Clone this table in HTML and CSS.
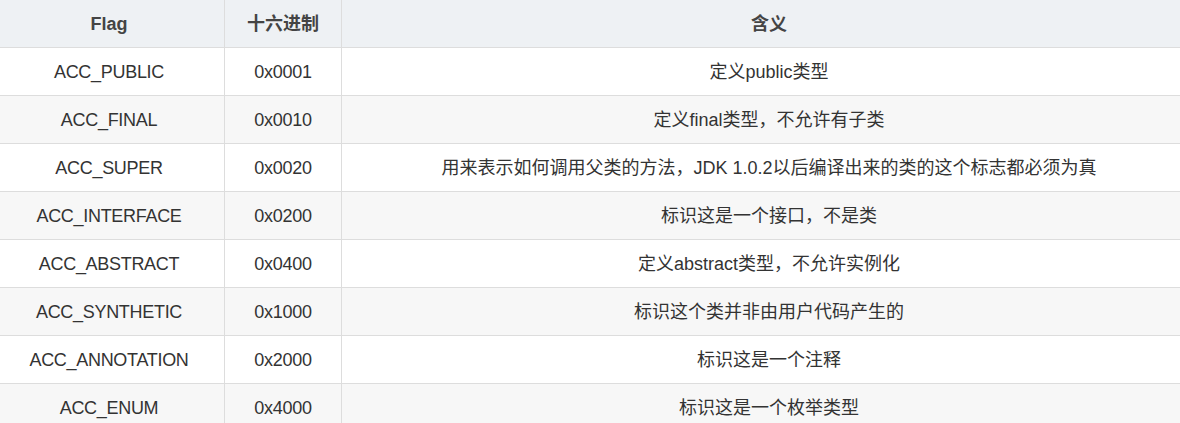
FILE: index.html
```html
<!DOCTYPE html>
<html lang="zh-CN">
<head>
<meta charset="utf-8">
<title>Access flags</title>
<link rel="stylesheet" href="styles.css">
</head>
<body>
<table class="flags">
  <colgroup>
    <col class="c-flag">
    <col class="c-hex">
    <col class="c-desc">
  </colgroup>
  <thead>
    <tr><th>Flag</th><th>十六进制</th><th>含义</th></tr>
  </thead>
  <tbody>
    <tr><td class="code">ACC_PUBLIC</td><td class="code">0x0001</td><td>定义public类型</td></tr>
    <tr><td class="code">ACC_FINAL</td><td class="code">0x0010</td><td>定义final类型，不允许有子类</td></tr>
    <tr><td class="code">ACC_SUPER</td><td class="code">0x0020</td><td>用来表示如何调用父类的方法，JDK 1.0.2以后编译出来的类的这个标志都必须为真</td></tr>
    <tr><td class="code">ACC_INTERFACE</td><td class="code">0x0200</td><td>标识这是一个接口，不是类</td></tr>
    <tr><td class="code">ACC_ABSTRACT</td><td class="code">0x0400</td><td>定义abstract类型，不允许实例化</td></tr>
    <tr><td class="code">ACC_SYNTHETIC</td><td class="code">0x1000</td><td>标识这个类并非由用户代码产生的</td></tr>
    <tr><td class="code">ACC_ANNOTATION</td><td class="code">0x2000</td><td>标识这是一个注释</td></tr>
    <tr><td class="code">ACC_ENUM</td><td class="code">0x4000</td><td>标识这是一个枚举类型</td></tr>
  </tbody>
</table>
</body>
</html>
```

FILE: styles.css
```css
html, body {
  margin: 0;
  padding: 0;
  background: #ffffff;
  overflow: hidden;
}

.flags {
  width: 1202px;
  margin-left: -6px;
  table-layout: fixed;
  border-collapse: separate;
  border-spacing: 0;
  font-family: "Liberation Sans", Arial, "Noto Sans CJK SC", sans-serif;
  font-size: 18px;
  color: #333333;
}

.c-flag { width: 231px; }
.c-hex { width: 117px; }

.flags th,
.flags td {
  height: 48px;
  padding: 0 8px;
  text-align: center;
  vertical-align: middle;
  border-bottom: 1px solid #dddddd;
  border-right: 1px solid #dddddd;
  box-sizing: border-box;
  line-height: 24px;
  white-space: nowrap;
}

.flags th {
  background: #eef1f4;
  font-weight: bold;
  color: #444444;
}

.flags td.code {
  letter-spacing: -0.3px;
}

.flags th:last-child,
.flags td:last-child {
  border-right: none;
}

.flags tbody tr:nth-child(even) td {
  background: #f7f7f7;
}
```
